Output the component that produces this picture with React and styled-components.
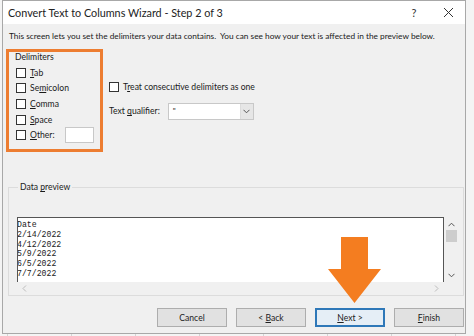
import React from "react";
import styled, { createGlobalStyle } from "styled-components";

const GlobalStyle = createGlobalStyle`
  * { box-sizing: border-box; }
  body {
    margin: 0;
    font-family: Lato, "Noto Sans", sans-serif;
    color: #1a1a1a;
  }
`;

const delimiters = [
  { pre: "", key: "T", post: "ab" },
  { pre: "Se", key: "m", post: "icolon" },
  { pre: "", key: "C", post: "omma" },
  { pre: "", key: "S", post: "pace" },
];

const previewRows = ["Date", "2/14/2022", "4/12/2022", "5/9/2022", "6/5/2022", "7/7/2022"];

const App = () => {
  return (
    <>
      <GlobalStyle />
      <Sheet>
        <Dialog>
          <TitleBar>
            <Title>Convert Text to Columns Wizard - Step 2 of 3</Title>
            <TitleButton>?</TitleButton>
            <TitleButton>
              <svg width="11" height="11" viewBox="0 0 11 11">
                <path d="M1 1 L10 10 M10 1 L1 10" stroke="#333" strokeWidth="1" />
              </svg>
            </TitleButton>
          </TitleBar>

          <Intro>
            This screen lets you set the delimiters your data contains.&nbsp; You can see how your text is
            affected in the preview below.
          </Intro>

          <OptionsRow>
            <DelimiterBox>
              <GroupLabel>Delimiters</GroupLabel>
              {delimiters.map((d) => (
                <CheckRow key={d.post}>
                  <Check />
                  <span>
                    {d.pre}
                    <u>{d.key}</u>
                    {d.post}
                  </span>
                </CheckRow>
              ))}
              <CheckRow>
                <Check />
                <span>
                  <u>O</u>ther:
                </span>
                <SmallInput />
              </CheckRow>
            </DelimiterBox>

            <SideOptions>
              <CheckRow>
                <Check />
                <span>
                  T<u>r</u>eat consecutive delimiters as one
                </span>
              </CheckRow>
              <QualifierRow>
                <span>
                  Text <u>q</u>ualifier:
                </span>
                <Select>
                  <SelectValue>"</SelectValue>
                  <SelectArrow>
                    <svg width="7" height="5" viewBox="0 0 7 5">
                      <path d="M0.5 0.8 L3.5 3.8 L6.5 0.8" fill="none" stroke="#555" strokeWidth="1" />
                    </svg>
                  </SelectArrow>
                </Select>
              </QualifierRow>
            </SideOptions>
          </OptionsRow>

          <PreviewGroup>
            <PreviewLegend>
              Data <u>p</u>review
            </PreviewLegend>
            <PreviewFrame>
              <PreviewText>
                {previewRows.map((r) => (
                  <PreviewLine key={r}>{r}</PreviewLine>
                ))}
              </PreviewText>
              <VScroll>
                <ScrollGlyph>
                  <svg width="7" height="5" viewBox="0 0 7 5">
                    <path d="M0.5 4.2 L3.5 1.2 L6.5 4.2" fill="none" stroke="#555" strokeWidth="1" />
                  </svg>
                </ScrollGlyph>
                <Thumb />
                <ScrollSpacer />
                <ScrollGlyph>
                  <svg width="7" height="5" viewBox="0 0 7 5">
                    <path d="M0.5 0.8 L3.5 3.8 L6.5 0.8" fill="none" stroke="#555" strokeWidth="1" />
                  </svg>
                </ScrollGlyph>
              </VScroll>
            </PreviewFrame>
            <HScroll>
              <svg width="5" height="7" viewBox="0 0 5 7">
                <path d="M4 0.5 L1 3.5 L4 6.5" fill="none" stroke="#bbb" strokeWidth="1" />
              </svg>
              <svg width="5" height="7" viewBox="0 0 5 7">
                <path d="M1 0.5 L4 3.5 L1 6.5" fill="none" stroke="#bbb" strokeWidth="1" />
              </svg>
            </HScroll>
          </PreviewGroup>

          <ButtonRow>
            <Button>
              <span>Cancel</span>
            </Button>
            <Button>
              <span>
                &lt; <u>B</u>ack
              </span>
            </Button>
            <Button primary>
              <span>
                <u>N</u>ext &gt;
              </span>
            </Button>
            <Button>
              <span>
                <u>F</u>inish
              </span>
            </Button>
          </ButtonRow>

          <Arrow width="54" height="68" viewBox="0 0 54 68">
            <path d="M13 0 H40 V32 H53 L26.5 66 L0 32 H13 Z" fill="#f47d20" />
          </Arrow>
        </Dialog>
      </Sheet>
    </>
  );
};

const Sheet = styled.div`
  width: 474px;
  height: 336px;
  overflow: hidden;
  background-color: #f4f4f4;
  background-image: linear-gradient(90deg, #d4d4d4 1px, transparent 1px);
  background-size: 64px 20px;
  background-position: 7px 0;
`;

const Dialog = styled.div`
  position: relative;
  width: 464px;
  height: 334px;
  margin-left: 2px;
  background: #f0f0f0;
  border: 1px solid #a8a8a8;
  display: flex;
  flex-direction: column;
`;

const TitleBar = styled.div`
  height: 23px;
  flex-shrink: 0;
  background: #fff;
  display: flex;
  align-items: center;
  padding-left: 5px;
`;

const Title = styled.div`
  flex: 1;
  font-size: 10.8px;
  color: #222;
`;

const TitleButton = styled.div`
  width: 34px;
  display: flex;
  justify-content: center;
  font-size: 11px;
  color: #333;
`;

const Intro = styled.div`
  padding: 6px 0 0 6px;
  font-size: 8.3px;
  line-height: 12px;
  white-space: nowrap;
`;

const OptionsRow = styled.div`
  display: flex;
  margin-top: 7px;
  padding-left: 3px;
`;

const DelimiterBox = styled.div`
  width: 97px;
  height: 103px;
  border: 3px solid #ed7d31;
  padding: 0 0 0 7px;
  font-size: 8.6px;
`;

const GroupLabel = styled.div`
  height: 11px;
  line-height: 11px;
  margin: 0 0 2px -1px;
  font-size: 8.6px;
`;

const CheckRow = styled.div`
  display: flex;
  align-items: center;
  gap: 4px;
  height: 15.6px;
  font-size: 8.6px;
`;

const Check = styled.div`
  width: 10px;
  height: 10px;
  border: 1px solid #333;
  background: #fff;
  flex-shrink: 0;
`;

const SmallInput = styled.div`
  width: 29px;
  height: 16px;
  margin-left: 6px;
  background: #fff;
  border: 1px solid #c8c8c8;
`;

const SideOptions = styled.div`
  display: flex;
  flex-direction: column;
  padding: 30px 0 0 6px;
  gap: 8px;
`;

const QualifierRow = styled.div`
  display: flex;
  align-items: center;
  font-size: 8.6px;
  gap: 8px;
`;

const Select = styled.div`
  width: 86px;
  height: 17px;
  background: #fff;
  border: 1px solid #c8c8c8;
  display: flex;
`;

const SelectValue = styled.div`
  flex: 1;
  padding-left: 4px;
  font-size: 8px;
  line-height: 14px;
`;

const SelectArrow = styled.div`
  width: 13px;
  border-left: 1px solid #dcdcdc;
  background: #e6e6e6;
  display: flex;
  align-items: center;
  justify-content: center;
`;

const PreviewGroup = styled.fieldset`
  margin: 30px 1px 0 5px;
  height: 114px;
  padding: 25px 5px 0 8px;
  border: 1px solid #dcdcdc;
  min-width: 0;
`;

const PreviewLegend = styled.legend`
  font-size: 8.6px;
  padding: 0 2px;
  margin-left: 1px;
`;

const PreviewFrame = styled.div`
  display: flex;
  height: 65px;
`;

const PreviewText = styled.div`
  width: 427px;
  background: #fff;
  border: 1px solid #555;
  border-bottom: none;
  padding-top: 2px;
  overflow: hidden;
`;

const PreviewLine = styled.div`
  font-family: "Liberation Mono", "Courier New", monospace;
  font-size: 8.2px;
  line-height: 9.8px;
  height: 9.8px;
  margin-left: -1px;
  color: #222;
`;

const VScroll = styled.div`
  width: 14px;
  display: flex;
  flex-direction: column;
  align-items: center;
  padding: 3px 0 3px;
`;

const ScrollGlyph = styled.div`
  height: 8px;
  display: flex;
  align-items: center;
`;

const Thumb = styled.div`
  width: 11px;
  height: 12px;
  margin-top: 2px;
  background: #cdcdcd;
`;

const ScrollSpacer = styled.div`
  flex: 1;
`;

const HScroll = styled.div`
  width: 427px;
  height: 13px;
  display: flex;
  align-items: center;
  justify-content: space-between;
  padding: 0 5px;
`;

const ButtonRow = styled.div`
  display: flex;
  justify-content: flex-end;
  gap: 9px;
  padding: 12px 1px 0 0;
`;

const Button = styled.div`
  width: 70px;
  height: 19px;
  display: flex;
  align-items: center;
  justify-content: center;
  font-size: 8.6px;
  background: ${({ primary }) => (primary ? "#e5eef6" : "#e1e1e1")};
  border: ${({ primary }) => (primary ? "2px solid #2f78b8" : "1px solid #adadad")};
  color: #222;
`;

const Arrow = styled.svg`
  position: absolute;
  left: 325px;
  top: 236px;
`;

export default App;
